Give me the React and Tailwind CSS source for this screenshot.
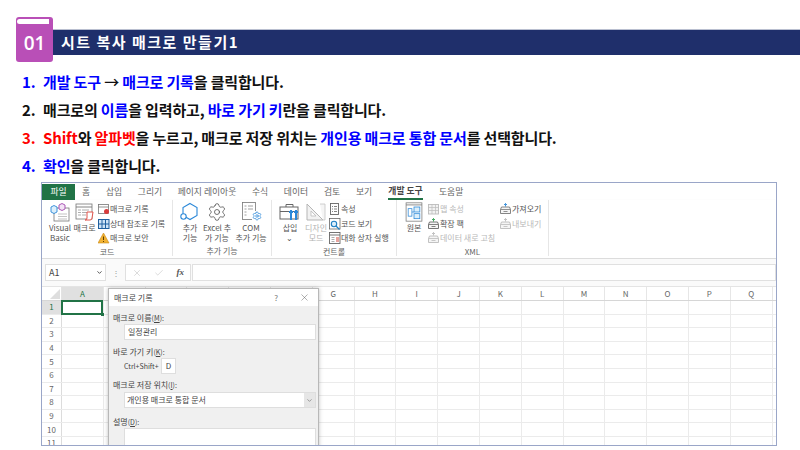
import React from "react";
import { Settings, X, ChevronDown, Check } from "lucide-react";

const blue = "text-[#0000ff]";
const red = "text-[#ff0000]";

function Step({ n, color = "", children }) {
  return (
    <div className="flex h-[28px] items-center whitespace-nowrap">
      <span className={`w-[21px] shrink-0 ${color}`}>{n}.</span>
      <span>{children}</span>
    </div>
  );
}

const Doc = ({ className = "", children, s = 12 }) => (
  <svg width={s} height={s} viewBox="0 0 12 12" className={`shrink-0 ${className}`}>
    {children}
  </svg>
);

const IcoVB = () => (
  <svg width="20" height="20" viewBox="0 0 20 20">
    <rect x="4" y="6" width="15" height="13" fill="#fff" stroke="#777" strokeWidth=".8" />
    <path d="M8 12h9M8 14.500h9M8 17h9" stroke="#aaa" strokeWidth=".7" />
    <path d="M1 5l3-1.500L7 5v5l-3 1.500L1 10z" fill="#dceffb" stroke="#2b88d8" strokeWidth=".9" />
    <path d="M9 3l3-1.500L15 3v4l-3 1.500L9 7z" fill="#f3e3f5" stroke="#a347b0" strokeWidth=".9" />
  </svg>
);
const IcoMacro = () => (
  <svg width="20" height="20" viewBox="0 0 20 20">
    <rect x="1" y="2" width="16" height="15" fill="#fff" stroke="#777" strokeWidth=".8" />
    <path d="M1 5h16" stroke="#777" strokeWidth=".9" />
    <path d="M3 8h3M3 10.500h3M3 13h3M7 8h7M7 10.500h5M7 13h4" stroke="#999" strokeWidth=".8" />
    <path d="M12 10h6l-1 6q0 2-2 2h-5q2 0 2-2z" fill="#fff" stroke="#e0524a" strokeWidth="1" />
  </svg>
);
const IcoRec = () => (
  <Doc>
    <rect x=".5" y="1.500" width="10" height="9" fill="#fff" stroke="#777" strokeWidth=".8" />
    <path d="M.5 4h10" stroke="#777" strokeWidth=".8" />
    <circle cx="8.500" cy="8.500" r="2.500" fill="#d83b3b" />
  </Doc>
);
const IcoRel = () => (
  <Doc>
    <rect x=".5" y="1.500" width="10.500" height="9" fill="#cfe4f7" stroke="#1f5f9e" strokeWidth="1" />
    <path d="M4 1.500v9M7.500 1.500v9M.5 6h10.500" stroke="#1f5f9e" strokeWidth="1" />
  </Doc>
);
const IcoWarn = () => (
  <Doc>
    <path d="M5.500 1L11 11H0z" fill="#f2b233" stroke="#c98a16" strokeWidth=".6" />
    <path d="M5.500 4.500v3.500M5.500 9v1" stroke="#5a3d00" strokeWidth="1" />
  </Doc>
);
const IcoHex = () => (
  <svg width="20" height="20" viewBox="0 0 20 20">
    <path d="M10 1.500l7 4v8l-7 4-7-4v-8z" fill="#fff" stroke="#2b88d8" strokeWidth="1.100" />
    <circle cx="3.500" cy="14.500" r="2.700" fill="#fff" stroke="#2b88d8" strokeWidth="1.100" />
  </svg>
);
const IcoCom = () => (
  <div className="relative h-[20px] w-[20px]">
    <svg width="20" height="20" viewBox="0 0 20 20">
      <rect x="1.500" y=".5" width="13" height="17" fill="#fff" stroke="#777" strokeWidth=".8" />
      <path d="M3.500 4h2M7 4h5M3.500 7h2M7 7h5M3.500 10h2M3.500 13h2" stroke="#888" strokeWidth=".8" />
    </svg>
    <Settings size={10} strokeWidth={1.800} className="absolute right-[-1px] bottom-[1px] bg-white text-[#2b88d8]" />
  </div>
);
const IcoInsert = () => (
  <svg width="22" height="20" viewBox="0 0 22 20">
    <path d="M7 5V2.500h7V5" fill="none" stroke="#666" strokeWidth="1" />
    <rect x="1" y="5" width="18" height="12" fill="#fff" stroke="#666" strokeWidth="1" />
    <path d="M1 9.500h18" stroke="#666" strokeWidth="1" />
    <path d="M12 8v10M17 8v10" stroke="#2b88d8" strokeWidth="2" />
    <path d="M10 10h4M15 10h4" stroke="#2b88d8" strokeWidth="2" />
  </svg>
);
const IcoSquare = () => (
  <svg width="20" height="20" viewBox="0 0 20 20">
    <path d="M1 18V2l16 16z" fill="#f2f2f2" stroke="#b5b5b5" strokeWidth="1" />
    <path d="M5 14V9l5 5z" fill="#fff" stroke="#bbb" strokeWidth=".8" />
    <path d="M14 2h5v16h-2" fill="#f5f5f5" stroke="#c4c4c4" strokeWidth=".8" />
  </svg>
);
const IcoProp = () => (
  <Doc>
    <rect x="1.500" y=".5" width="8" height="11" fill="#fff" stroke="#666" strokeWidth=".9" />
    <path d="M3 3.500h1M5 3.500h3M3 6h1M5 6h3M3 8.500h1M5 8.500h3" stroke="#666" strokeWidth=".8" />
  </Doc>
);
const IcoCode = () => (
  <Doc>
    <rect x=".5" y=".5" width="10.500" height="10.500" fill="#fff" stroke="#666" strokeWidth=".8" />
    <circle cx="5" cy="6" r="2.700" fill="#dceffb" stroke="#1f7fc4" strokeWidth="1.100" />
    <path d="M7 8l3.500 3.500" stroke="#1f7fc4" strokeWidth="1.300" />
  </Doc>
);
const IcoDlg = () => (
  <Doc>
    <rect x=".5" y=".5" width="10.500" height="11" fill="#fff" stroke="#666" strokeWidth=".9" />
    <path d="M.5 3h10.500" stroke="#666" strokeWidth=".9" />
    <path d="M2.500 5.500h3M2.500 7.500h3M2.500 9.500h3" stroke="#999" strokeWidth=".8" />
    <rect x="7" y="5" width="3" height="5" fill="#e8a39d" />
  </Doc>
);
const IcoSource = () => (
  <svg width="18" height="20" viewBox="0 0 20 24">
    <rect x=".5" y="1" width="19" height="22" fill="#fff" stroke="#777" strokeWidth=".9" />
    <path d="M.5 3.500h19" stroke="#777" strokeWidth="1" />
    <rect x="3" y="8" width="4.500" height="9" fill="#fff" stroke="#2b88d8" strokeWidth=".9" />
    <rect x="10" y="6" width="7" height="6" fill="#dceffb" stroke="#2b88d8" strokeWidth=".9" />
    <rect x="10" y="14" width="7" height="6" fill="#dceffb" stroke="#2b88d8" strokeWidth=".9" />
    <path d="M7.500 12H10" stroke="#2b88d8" strokeWidth=".9" />
  </svg>
);
const IcoMap = ({ tone = "#bbb" }) => (
  <Doc>
    <rect x=".5" y="1.500" width="10" height="9.500" fill="#f2f2f2" stroke={tone} strokeWidth=".9" />
    <path d="M.5 4.500h10M.5 7.500h10M4 1.500v9.500M7.500 1.500v9.500" stroke={tone} strokeWidth=".7" />
  </Doc>
);
const IcoPack = ({ tone = "#666", accent = "#2e9e4f" }) => (
  <Doc>
    <path d="M1.500 4h8l1 2.500v4H.5v-4z" fill="#f5f5f5" stroke={tone} strokeWidth=".9" />
    <path d="M.5 6.500h10M3.500 8.500h4" stroke={tone} strokeWidth=".8" />
    <path d="M5.500 .5v3M4 2L5.500 .5 7 2" fill="none" stroke={accent} strokeWidth=".9" />
  </Doc>
);

function Big({ icon, lines, w, ml = 0, dim }) {
  return (
    <div className="flex shrink-0 flex-col items-center" style={{ width: w, marginLeft: ml }}>
      <div className="flex h-[20px] items-center">{icon}</div>
      <div className={`mt-[1px] text-center leading-[10px] ${dim ? "text-[#b3b3b3]" : ""}`}>
        {lines.map((l) => (
          <div key={l} className="whitespace-nowrap">{l}</div>
        ))}
      </div>
    </div>
  );
}

function Small({ icon, text, dim }) {
  return (
    <div className={`flex h-[14.5px] items-center whitespace-nowrap ${dim ? "text-[#b8b8b8]" : ""}`}>
      {icon}
      <span>{text}</span>
    </div>
  );
}

function Group({ w, label, children }) {
  return (
    <div className="flex h-[56px] shrink-0 flex-col border-r border-[#e6e6e6]" style={{ width: w }}>
      <div className="flex h-[48px] items-start pt-[2px]">{children}</div>
      <div className="text-center leading-[11px] text-[#666]">{label}</div>
    </div>
  );
}

const tabs = [
  ["홈", 22],
  ["삽입", 34],
  ["그리기", 38],
  ["페이지 레이아웃", 76],
  ["수식", 30],
  ["데이터", 42],
  ["검토", 30],
  ["보기", 34],
];

const cols = "ABCDEFGHIJKLMNOPQ".split("");
const hidden = "BCDEF";
const rows = [1, 2, 3, 4, 5, 6, 7, 8, 9, 10, 11];

function Label({ children, k }) {
  return (
    <div className="h-[12px] leading-[12px] whitespace-nowrap text-[#444]">
      {children}
      <span className="text-[7px]">(<span className="underline">{k}</span>):</span>
    </div>
  );
}

export default function App() {
  return (
    <div className="relative flex h-[450px] w-[800px] flex-col overflow-hidden bg-white font-['Noto_Sans_CJK_KR','Noto_Sans',sans-serif]">
      {/* title */}
      <div className="flex pt-[17px] pl-[16px]">
        <div className="relative flex h-[45px] w-[37px] shrink-0 items-end justify-center rounded-[3px] bg-[#b94fb7] pb-[7px] text-[19px] leading-[24px] font-semibold text-white">
          <div className="absolute top-[2px] left-[1px] h-[5px] w-[32px] rounded-l-[3px] bg-white" />
          <span className="font-['Open_Sans',sans-serif]">01</span>
        </div>
        <div className="mt-[12px] flex h-[26px] flex-1 items-center border-t border-[#b9bfd0] bg-[#1f2f6b] pl-[8px] text-[15px] font-bold tracking-[1.5px] text-white">
          시트 복사 매크로 만들기1
        </div>
      </div>

      {/* steps */}
      <div className="mt-[6px] flex flex-col pl-[22px] text-[15px] font-bold tracking-[-0.15px] text-[#111]">
        <Step n="1" color={blue}>
          <span className={blue}>개발 도구</span> <span className="font-medium">→</span> <span className={blue}>매크로 기록</span>을 클릭합니다.
        </Step>
        <Step n="2">
          매크로의 <span className={blue}>이름</span>을 입력하고, <span className={blue}>바로 가기 키</span>란을 클릭합니다.
        </Step>
        <Step n="3" color={red}>
          <span className={red}>Shift</span>와 <span className={red}>알파벳</span>을 누르고, 매크로 저장 위치는{" "}
          <span className={blue}>개인용 매크로 통합 문서</span>를 선택합니다.
        </Step>
        <Step n="4" color={blue}>
          <span className={blue}>확인</span>을 클릭합니다.
        </Step>
      </div>

      {/* excel */}
      <div className="relative mt-[2px] ml-[41px] flex h-[264px] w-[736px] flex-col overflow-hidden border border-[#9aa6c8] bg-white text-[8px] text-[#555]">
        {/* tabs */}
        <div className="flex h-[17px] shrink-0 items-center text-[8.8px] text-[#666]">
          <div className="flex h-[16px] w-[33px] items-center justify-center bg-[#217346] text-white">파일</div>
          <div className="flex items-center">
            {tabs.map(([t, w]) => (
              <div key={t} className="text-center whitespace-nowrap" style={{ width: w }}>{t}</div>
            ))}
          </div>
          <div className="ml-[7px] flex h-[16px] w-[35px] items-center justify-center border-b-2 border-[#217346] font-bold whitespace-nowrap text-[#444]">
            개발 도구
          </div>
          <div className="ml-[16px] whitespace-nowrap">도움말</div>
        </div>

        {/* ribbon */}
        <div className="flex h-[59px] shrink-0 border-b border-[#dcdcdc] shadow-[0_1px_2px_rgba(0,0,0,0.12)]">
          <Group w={131} label="코드">
            <Big w={24} ml={6} icon={<IcoVB />} lines={["Visual", "Basic"]} />
            <Big w={25} icon={<IcoMacro />} lines={["매크로"]} />
            <div className="ml-[1px] flex flex-col">
              <Small icon={<IcoRec />} text="매크로 기록" />
              <Small icon={<IcoRel />} text="상대 참조로 기록" />
              <Small icon={<IcoWarn />} text="매크로 보안" />
            </div>
          </Group>
          <Group w={99} label="추가 기능">
            <Big w={20} ml={7} icon={<IcoHex />} lines={["추가", "기능"]} />
            <Big w={34} icon={<Settings size={20} strokeWidth={1} className="text-[#555]" />} lines={["Excel 추", "가 기능"]} />
            <Big w={34} icon={<IcoCom />} lines={["COM", "추가 기능"]} />
          </Group>
          <Group w={125} label="컨트롤">
            <Big w={30} ml={3} icon={<IcoInsert />} lines={["삽입", "⌄"]} />
            <Big w={22} dim icon={<IcoSquare />} lines={["디자인", "모드"]} />
            <div className="ml-[2px] flex flex-col">
              <Small icon={<IcoProp />} text="속성" />
              <Small icon={<IcoCode />} text="코드 보기" />
              <Small icon={<IcoDlg />} text="대화 상자 실행" />
            </div>
          </Group>
          <Group w={152} label="XML">
            <Big w={20} ml={7} icon={<IcoSource />} lines={["원본"]} />
            <div className="ml-[4px] flex w-[72px] shrink-0 flex-col">
              <Small dim icon={<IcoMap />} text="맵 속성" />
              <Small icon={<IcoPack />} text="확장 팩" />
              <Small dim icon={<IcoPack tone="#bbb" accent="#bbb" />} text="데이터 새로 고침" />
            </div>
            <div className="flex flex-col">
              <Small icon={<IcoPack tone="#777" accent="#2b88d8" />} text="가져오기" />
              <Small dim icon={<IcoPack tone="#bbb" accent="#bbb" />} text="내보내기" />
            </div>
          </Group>
        </div>

        {/* formula bar */}
        <div className="flex h-[27px] shrink-0 items-center bg-[#fafafa] pl-[3px] text-[#777]">
          <div className="flex h-[17px] w-[61px] items-center justify-between border border-[#e0e0e0] bg-white pr-[2px] pl-[3px] text-[9px] text-[#444]">
            A1
            <ChevronDown size={7} strokeWidth={3} />
          </div>
          <div className="w-[19px] text-center text-[#999]">⋮</div>
          <div className="flex h-[17px] w-[66px] items-center justify-around border border-[#e0e0e0] bg-white">
            <X size={10} strokeWidth={1} className="text-[#aaa]" />
            <Check size={10} strokeWidth={1} className="text-[#aaa]" />
            <span className="font-['Liberation_Serif',serif] text-[9px] font-bold text-[#555] italic">fx</span>
          </div>
          <div className="ml-[1px] h-[17px] flex-1 border border-[#e0e0e0] bg-white" />
        </div>

        {/* sheet */}
        <div className="relative flex-1 overflow-hidden border-t border-[#e4e4e4]">
          <div className="flex h-[14px] border-b border-[#d6d6d6] text-[8px] text-[#666]">
            <div className="relative h-full w-[20px] shrink-0 border-r border-[#e2e2e2]">
              <svg width="10" height="10" viewBox="0 0 10 10" className="absolute right-[1px] bottom-[1px]">
                <path d="M10 0v10H0z" fill="#dedede" />
              </svg>
            </div>
            {cols.map((c) => (
              <div
                key={c}
                className={`flex w-[41.8px] shrink-0 items-center justify-center border-r border-[#e6e6e6] ${c === "A" ? "bg-[#e0e0e0] text-[#217346]" : ""}`}
              >
                {hidden.includes(c) ? "" : c}
              </div>
            ))}
          </div>
          {rows.map((r) => (
            <div key={r} className="flex h-[13.6px] border-b border-[#ebebeb]">
              <div className={`flex w-[20px] shrink-0 items-center justify-center border-r border-[#dcdcdc] text-[#666] ${r === 1 ? "bg-[#e0e0e0] text-[#217346]" : ""}`}>
                {r}
              </div>
              {cols.map((c) => (
                <div key={c} className="w-[41.8px] shrink-0 border-r border-[#ebebeb]" />
              ))}
            </div>
          ))}
          {/* active cell */}
          <div className="absolute top-[13px] left-[19px] h-[15px] w-[42px] border-2 border-[#217346]" />
          <div className="absolute top-[26px] left-[59px] h-[3px] w-[3px] bg-[#217346]" />
        </div>

        {/* dialog */}
        <div className="absolute top-[105px] left-[66px] flex h-[170px] w-[211px] flex-col border border-[#b8b8b8] bg-[#f0f0f0] shadow-[0_0_4px_rgba(0,0,0,0.25)]">
          <div className="flex h-[17px] shrink-0 items-center bg-white pr-[8px] pl-[5px] text-[#444]">
            <span className="flex-1">매크로 기록</span>
            <span className="mr-[21px] text-[#777]">?</span>
            <X size={11} strokeWidth={1} className="text-[#555]" />
          </div>
          <div className="flex flex-col pt-[6px] pl-[4px]">
            <Label k="M">매크로 이름</Label>
            <div className="ml-[11px] flex h-[16px] w-[192px] items-center border border-[#dedede] bg-white pl-[3px] text-[#444]">일정관리</div>
            <div className="mt-[6px]"><Label k="K">바로 가기 키</Label></div>
            <div className="ml-[11px] flex h-[16px] items-center">
              <span className="w-[37px] text-[7px] whitespace-nowrap text-[#444]">Ctrl+Shift+</span>
              <span className="flex h-[16px] w-[15px] items-center justify-center border border-[#dedede] bg-white text-[#444]">D</span>
            </div>
            <div className="mt-[5px]"><Label k="I">매크로 저장 위치</Label></div>
            <div className="mt-[1px] ml-[11px] flex h-[16px] w-[192px] items-center justify-between border border-[#dedede] bg-white pl-[2px] text-[#444]">
              개인용 매크로 통합 문서
              <span className="flex h-full w-[11px] items-center justify-center bg-[#e6e6e6]">
                <ChevronDown size={7} className="text-[#666]" />
              </span>
            </div>
            <div className="mt-[8px]"><Label k="D">설명</Label></div>
            <div className="ml-[11px] h-[40px] w-[192px] border border-[#dedede] bg-white" />
          </div>
        </div>
      </div>
    </div>
  );
}
